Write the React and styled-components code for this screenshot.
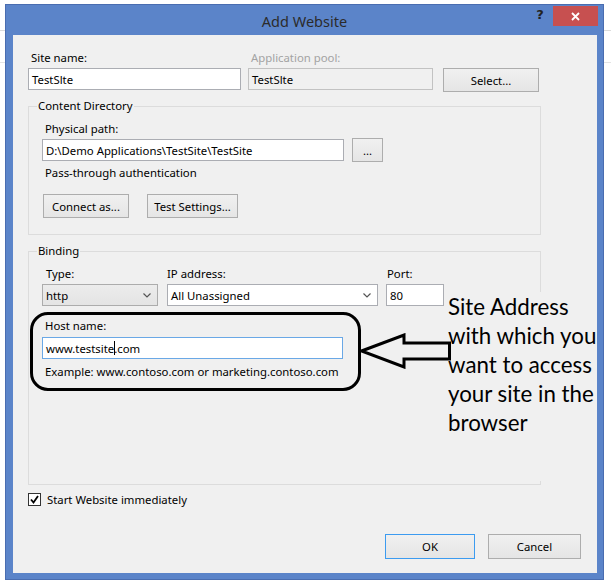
import React from 'react';
import styled, { createGlobalStyle } from 'styled-components';

const GlobalStyle = createGlobalStyle`
  html, body {
    margin: 0;
    padding: 0;
  }
  body {
    background:
      linear-gradient(#dcdcdc, #dcdcdc) 0 30px / 100% 1px no-repeat,
      linear-gradient(#e4e4e4, #e4e4e4) 0 62px / 100% 1px no-repeat,
      #ffffff;
    font-family: "Noto Sans", "Open Sans", sans-serif;
    font-size: 11.35px;
    color: #000;
  }
`;

const Page = styled.div`
  padding: 4px 0 0 5px;
`;

const Window = styled.div`
  width: 599px;
  height: 576px;
  box-sizing: border-box;
  border: 1px solid #4a6db0;
  background: #5b84c9;
  display: flex;
  flex-direction: column;
`;

const TitleBar = styled.div`
  height: 30px;
  flex: none;
  display: grid;
  grid-template-columns: 1fr auto 1fr;
`;

const Title = styled.div`
  grid-column: 2;
  align-self: center;
  font-size: 14.5px;
  color: #2b2b2b;
  padding-top: 1px;
`;

const Controls = styled.div`
  grid-column: 3;
  justify-self: end;
  align-self: start;
  display: flex;
  align-items: flex-start;
  margin-right: 5px;
`;

const HelpButton = styled.div`
  width: 20px;
  height: 20px;
  line-height: 20px;
  text-align: center;
  font-family: "DejaVu Sans", sans-serif;
  font-weight: bold;
  font-size: 13px;
  color: #222;
  margin-right: 3px;
`;

const CloseButton = styled.div`
  width: 45px;
  height: 20px;
  margin-top: 1px;
  background: #c75050;
  display: flex;
  align-items: center;
  justify-content: center;
`;

const Client = styled.div`
  flex: 1;
  margin: 0 6px 6px 7px;
  background: #f0f0f0;
  position: relative;
  overflow: hidden;
  box-sizing: border-box;
  padding: 15px 16px 14px 15px;
  display: flex;
  flex-direction: column;
`;

const Row = styled.div`
  display: flex;
  align-items: ${p => p.$align || 'flex-start'};
  margin-top: ${p => p.$top || 0}px;
  margin-left: ${p => p.$left || 0}px;
  gap: ${p => p.$gap || 0}px;
`;

const Field = styled.div`
  width: ${p => p.$w}px;
  margin-left: ${p => p.$left || 0}px;
  display: flex;
  flex-direction: column;
`;

const Label = styled.div`
  height: 16px;
  line-height: 16px;
  padding-left: ${p => (p.$indent ?? 3)}px;
  margin-top: ${p => p.$top || 0}px;
  margin-bottom: ${p => (p.$bottom ?? 2)}px;
  color: ${p => (p.$muted ? '#a3a3a3' : '#000')};
  white-space: nowrap;
`;

const TextBox = styled.div`
  width: ${p => (p.$w ? `${p.$w}px` : 'auto')};
  height: 22px;
  box-sizing: border-box;
  border: 1px solid ${p => (p.$focused ? '#6aa8e6' : p.$disabled ? '#c2c2c2' : '#abadb3')};
  background: ${p => (p.$disabled ? '#f0f0f0' : '#fff')};
  padding: 0 3px;
  display: flex;
  align-items: center;
  white-space: nowrap;
`;

const Combo = styled(TextBox)`
  justify-content: space-between;
  border-color: ${p => (p.$flat ? '#acacac' : '#abadb3')};
  background: ${p => (p.$flat ? 'linear-gradient(#ececec, #e4e4e4)' : '#fff')};
  padding-right: 6px;
`;

const Button = styled.div`
  width: ${p => p.$w}px;
  height: ${p => p.$h || 24}px;
  margin-left: ${p => p.$left || 0}px;
  margin-top: ${p => p.$top || 0}px;
  box-sizing: border-box;
  border: 1px solid ${p => (p.$primary ? '#3c9bf0' : '#adadad')};
  background: linear-gradient(#f0f0f0, #e5e5e5);
  display: flex;
  align-items: center;
  justify-content: center;
  flex: none;
`;

const GroupBox = styled.fieldset`
  margin: ${p => p.$top}px 0 0 0;
  padding: 0;
  width: 513px;
  height: ${p => (p.$h ? `${p.$h}px` : 'auto')};
  box-sizing: border-box;
  border: 1px solid #dcdcdc;
  min-width: 0;
`;

const Legend = styled.legend`
  margin-left: 8px;
  padding: 0 1px;
  line-height: 16px;
  height: 16px;
`;

const GroupBody = styled.div`
  padding: 7px 13px 16px 13px;
`;

const Callout = styled.div`
  width: 331px;
  height: 79px;
  box-sizing: border-box;
  margin: 6px 0 0 -12px;
  border: 3px solid #000;
  border-radius: 18px;
  padding: 3px 0 0 9px;
  display: flex;
  flex-direction: column;
`;

const Caret = styled.span`
  display: inline-block;
  width: 1px;
  height: 14px;
  background: #000;
  margin: 0 -1px 0 0;
`;

const CheckRow = styled.div`
  display: flex;
  align-items: center;
  height: 16px;
  margin-top: 6px;
  gap: 6px;
`;

const CheckBox = styled.div`
  width: 13px;
  height: 13px;
  box-sizing: border-box;
  border: 1px solid #333;
  background: #fff;
  display: flex;
  align-items: center;
  justify-content: center;
`;

const Footer = styled.div`
  margin-top: auto;
  display: flex;
  justify-content: flex-end;
  gap: 13px;
`;

const Note = styled.div`
  position: absolute;
  left: 435px;
  top: 257px;
  width: 160px;
  height: 189px;
  background: #f0f0f0;
  font-family: Lato, "Noto Sans", sans-serif;
  font-size: 22.3px;
  line-height: 29px;
  color: #000;
`;

const NoteLine = styled.div`
  white-space: nowrap;
`;

const Arrow = styled.svg`
  position: absolute;
  left: 347px;
  top: 298px;
`;

function Chevron() {
  return (
    <svg width="8" height="5" viewBox="0 0 8 5">
      <polyline points="0.5,0.5 4,4 7.5,0.5" fill="none" stroke="#555" strokeWidth="1.2" />
    </svg>
  );
}

export default function App() {
  return (
    <>
      <GlobalStyle />
      <Page>
        <Window>
          <TitleBar>
            <Title>Add Website</Title>
            <Controls>
              <HelpButton>?</HelpButton>
              <CloseButton>
                <svg width="9" height="9" viewBox="0 0 9 9">
                  <path d="M1 1 L8 8 M8 1 L1 8" stroke="#fff" strokeWidth="1.8" />
                </svg>
              </CloseButton>
            </Controls>
          </TitleBar>

          <Client>
            <Row>
              <Field $w={213}>
                <Label>Site name:</Label>
                <TextBox>TestSlte</TextBox>
              </Field>
              <Field $w={185} $left={7}>
                <Label $muted>Application pool:</Label>
                <TextBox $disabled>TestSlte</TextBox>
              </Field>
              <Button $w={96} $left={10} $top={18}>Select...</Button>
            </Row>

            <GroupBox $top={6}>
              <Legend>Content Directory</Legend>
              <GroupBody>
                <Label $bottom={1}>Physical path:</Label>
                <Row $align="center" $gap={8}>
                  <TextBox $w={302}>D:\Demo Applications\TestSite\TestSite</TextBox>
                  <Button $w={31}>...</Button>
                </Row>
                <Label $top={3} $bottom={0}>Pass-through authentication</Label>
                <Row $top={13} $left={1} $gap={18}>
                  <Button $w={86}>Connect as...</Button>
                  <Button $w={91}>Test Settings...</Button>
                </Row>
              </GroupBody>
            </GroupBox>

            <GroupBox $top={8} $h={242}>
              <Legend>Binding</Legend>
              <GroupBody>
                <Row>
                  <Field $w={116}>
                    <Label $indent={4}>Type:</Label>
                    <Combo $flat>
                      <span>http</span>
                      <Chevron />
                    </Combo>
                  </Field>
                  <Field $w={211} $left={9}>
                    <Label $indent={0}>IP address:</Label>
                    <Combo>
                      <span>All Unassigned</span>
                      <Chevron />
                    </Combo>
                  </Field>
                  <Field $w={58} $left={8}>
                    <Label $indent={1}>Port:</Label>
                    <TextBox>80</TextBox>
                  </Field>
                </Row>
                <Callout>
                  <Label $bottom={3}>Host name:</Label>
                  <TextBox $w={301} $focused>
                    www.testsite<Caret />.com
                  </TextBox>
                  <Label $top={5} $bottom={0}>Example: www.contoso.com or marketing.contoso.com</Label>
                </Callout>
              </GroupBody>
            </GroupBox>

            <CheckRow>
              <CheckBox>
                <svg width="9" height="9" viewBox="0 0 9 9">
                  <polyline points="1,4.5 3.5,7.5 8,1" fill="none" stroke="#000" strokeWidth="1.8" />
                </svg>
              </CheckBox>
              <span>Start Website immediately</span>
            </CheckRow>

            <Footer>
              <Button $w={90} $h={25} $primary>OK</Button>
              <Button $w={93} $h={25}>Cancel</Button>
            </Footer>

            <Note>
              <NoteLine>Site Address</NoteLine>
              <NoteLine>with which you</NoteLine>
              <NoteLine>want to access</NoteLine>
              <NoteLine>your site in the</NoteLine>
              <NoteLine>browser</NoteLine>
            </Note>

            <Arrow width="91" height="36" viewBox="0 0 91 36">
              <polygon
                points="1.5,18 44,2 44,10 89.5,10 89.5,26 44,26 44,34"
                fill="none"
                stroke="#000"
                strokeWidth="3"
                strokeLinejoin="miter"
              />
            </Arrow>
          </Client>
        </Window>
      </Page>
    </>
  );
}
